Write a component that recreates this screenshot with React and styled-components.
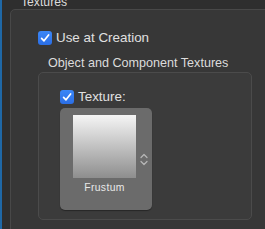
import React from "react";
import styled, { createGlobalStyle } from "styled-components";

const Global = createGlobalStyle`
  html, body { margin: 0; padding: 0; background: #2e2e2e; overflow: hidden; }
  body { font-family: "Liberation Sans", Arial, sans-serif; color: #dedede; }
`;

const Page = styled.div`
  width: 265px;
  height: 229px;
  box-sizing: border-box;
  border-left: 2px solid #1f68a6;
  padding-left: 8px;
  overflow: hidden;
`;

const Title = styled.div`
  font-size: 12.2px;
  line-height: 14px;
  margin-top: -5px;
  padding-left: 11px;
  color: #dcdcdc;
`;

const GroupBox = styled.div`
  box-sizing: border-box;
  width: 300px;
  height: 260px;
  border: 1px solid #484848;
  border-radius: 5px;
  background: #373737;
  padding: 21px 0 0 27px;
  display: flex;
  flex-direction: column;
  align-items: flex-start;
`;

const InnerBox = styled.div`
  box-sizing: border-box;
  width: 214px;
  height: 148px;
  border: 1px solid #4b4b4b;
  border-radius: 5px;
  background: #3b3b3b;
  padding: 17px 0 0 21px;
  display: flex;
  flex-direction: column;
  align-items: flex-start;
`;

const CheckRow = styled.label`
  display: flex;
  align-items: center;
  gap: 4px;
  font-size: 13.4px;
  line-height: 14px;
  height: 14px;
  color: #e0e0e0;
  margin-bottom: ${(p) => p.$mb || 0}px;
`;

const Box = styled.span`
  flex: none;
  width: 14px;
  height: 14px;
  border-radius: 3px;
  background: linear-gradient(#3b87f7, #2b6ee5);
  display: flex;
  align-items: center;
  justify-content: center;
`;

const SubTitle = styled.div`
  font-size: 12.6px;
  line-height: 14px;
  color: #dcdcdc;
  margin: 0 0 2px 10px;
`;

const Well = styled.div`
  position: relative;
  box-sizing: border-box;
  width: 92px;
  height: 102px;
  border-radius: 5px;
  background: #6b6b6b;
  box-shadow: 0 1px 1px rgba(0, 0, 0, 0.35);
  padding: 7px 16px 0 13px;
  display: flex;
  flex-direction: column;
  align-items: center;
`;

const Swatch = styled.div`
  flex: none;
  width: 63px;
  height: 63px;
  background: linear-gradient(#f5f5f5, #8e8e8e);
`;

const Caption = styled.div`
  margin-top: 3px;
  font-size: 10.4px;
  line-height: 13px;
  letter-spacing: 0.35px;
  color: #e8e8e8;
`;

const Stepper = styled.svg`
  position: absolute;
  right: 4px;
  top: 45px;
`;

const Check = () => (
  <Box>
    <svg width="10" height="10" viewBox="0 0 10 10">
      <path d="M1.6 5.4 L4 7.8 L8.6 2" fill="none" stroke="#fff" strokeWidth="1.7" strokeLinecap="round" strokeLinejoin="round" />
    </svg>
  </Box>
);

export default function App() {
  return (
    <>
      <Global />
      <Page>
        <Title>Textures</Title>
        <GroupBox>
          <CheckRow $mb={11}>
            <Check />
            Use at Creation
          </CheckRow>
          <SubTitle>Object and Component Textures</SubTitle>
          <InnerBox>
            <CheckRow $mb={4}>
              <Check />
              Texture:
            </CheckRow>
            <Well>
              <Swatch />
              <Caption>Frustum</Caption>
              <Stepper width="8" height="13" viewBox="0 0 8 13">
                <path d="M1 4.5 L4 1.5 L7 4.5 M1 8.5 L4 11.5 L7 8.5" fill="none" stroke="#b8b8b8" strokeWidth="1.2" strokeLinecap="round" strokeLinejoin="round" />
              </Stepper>
            </Well>
          </InnerBox>
        </GroupBox>
      </Page>
    </>
  );
}
